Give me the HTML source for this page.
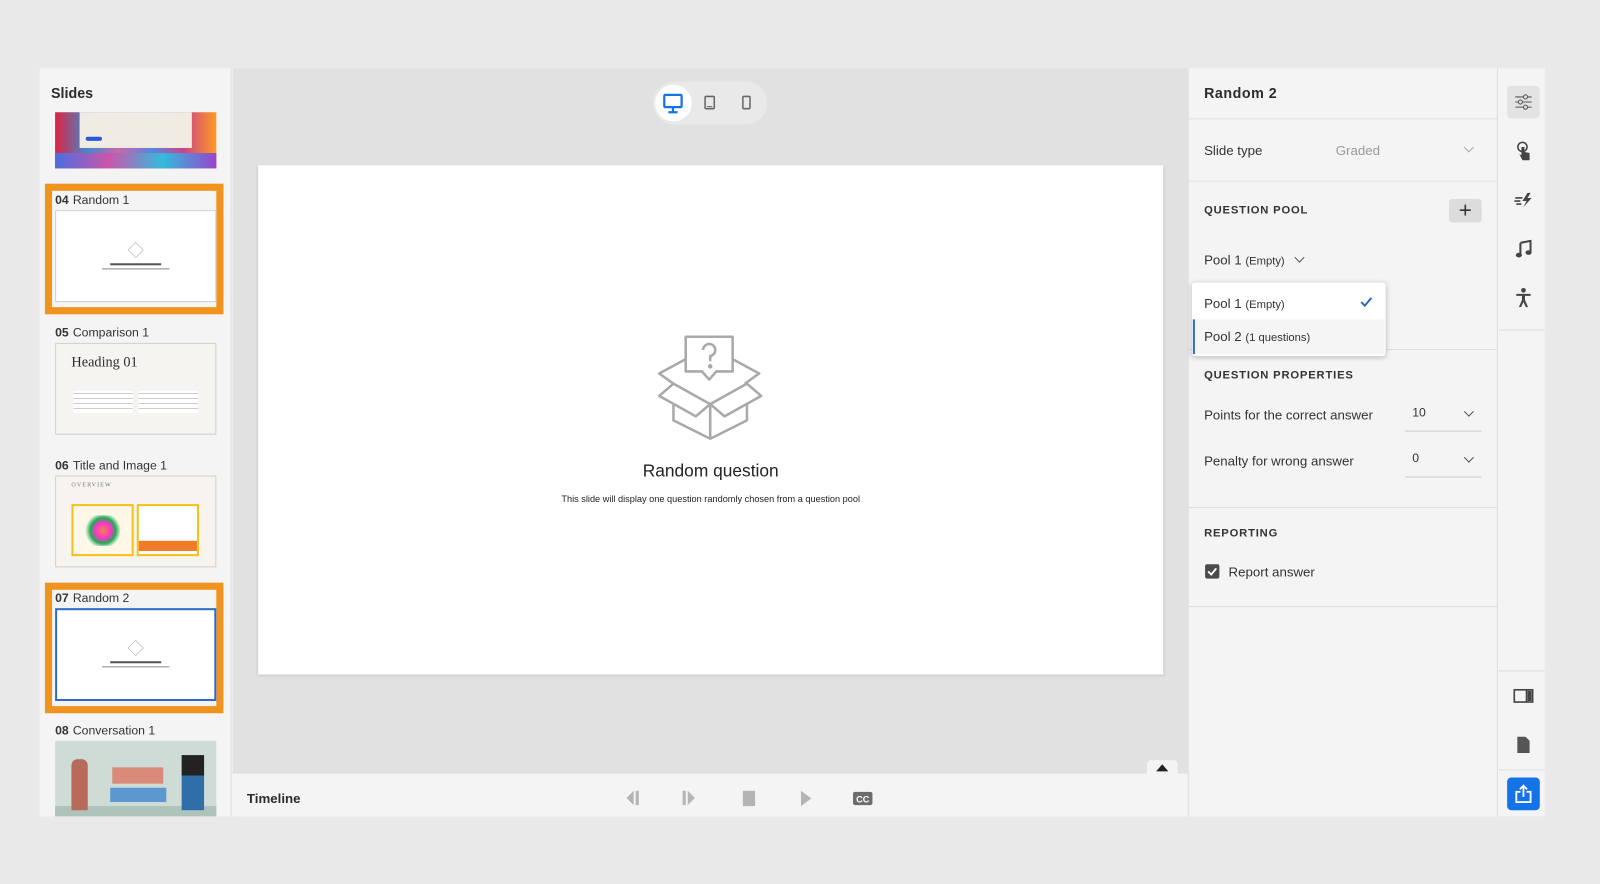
<!DOCTYPE html>
<html><head><meta charset="utf-8"><style>
*{box-sizing:border-box;margin:0;padding:0}
html,body{width:1600px;height:884px;overflow:hidden;background:#e9e9e9;font-family:"Liberation Sans",sans-serif;color:#2c2c2c}
#w{position:absolute;left:0;top:0;width:1568px;height:866px;transform:scale(1.0204);transform-origin:0 0}
.a{position:absolute}
.lbl{font-size:12px;color:#333}
.lbl b{font-weight:bold;margin-right:4px}
.th{position:absolute;left:54px;width:158px;border:1px solid #d0d0d0;background:#fff}
.cap{font-size:11px;font-weight:bold;letter-spacing:.8px;color:#333}
.row{font-size:13px;color:#333}
.chev{position:absolute;width:7px;height:7px;border-right:1.6px solid #555;border-bottom:1.6px solid #555;transform:rotate(45deg)}
.ic{position:absolute;left:1477px;width:32px;height:32px;display:flex;align-items:center;justify-content:center}
</style></head><body><div id="w">
<!-- app frame -->
<div class="a" style="left:39px;top:67px;width:1475px;height:733px;background:#f4f4f4"></div>
<!-- left panel -->
<div class="a" style="left:39px;top:67px;width:188px;height:733px;background:#f4f4f4;border-right:1px solid #ddd"></div>
<div class="a" style="left:50px;top:83px;font-size:14px;font-weight:bold">Slides</div>
<!-- thumb 1 -->
<div class="a" style="left:54px;top:110px;width:158px;height:55px;background:linear-gradient(90deg,#d24 0%,#48c 20%,#c6a 40%,#58d 60%,#c48 80%,#f92 100%)"></div>
<div class="a" style="left:54px;top:150px;width:158px;height:15px;background:linear-gradient(90deg,#4a6ee0,#c5a,#3bd,#94c)"></div>
<div class="a" style="left:78px;top:110px;width:110px;height:35px;background:#f0ece4"></div>
<div class="a" style="left:84px;top:134px;width:16px;height:4px;background:#2a5ad8;border-radius:2px"></div>
<!-- 04 -->
<div class="a" style="left:44px;top:180px;width:175px;height:128px;border:7px solid #f0941f;background:#f4f4f4"></div>
<div class="a lbl" style="left:54px;top:189px"><b>04</b>Random 1</div>
<div class="th" style="top:206px;height:90px"></div>
<div class="a" style="left:125px;top:237px;width:16px;height:16px;border:1px solid #bbb;transform:rotate(45deg) scale(.7)"></div>
<div class="a" style="left:108px;top:258px;width:50px;height:2px;background:#555"></div>
<div class="a" style="left:100px;top:263px;width:66px;height:1px;background:#888"></div>
<!-- 05 -->
<div class="a lbl" style="left:54px;top:319px"><b>05</b>Comparison 1</div>
<div class="th" style="top:336px;height:90px;background:#f6f4f1"></div>
<div class="a" style="left:70px;top:348px;font-family:'Liberation Serif',serif;font-size:14px">Heading 01</div>
<div class="a" style="left:72px;top:383px;width:58px;height:22px;background:repeating-linear-gradient(#fff 0 2px,#ccc 2px 3px,#fff 3px 5px)"></div>
<div class="a" style="left:136px;top:383px;width:58px;height:22px;background:repeating-linear-gradient(#fff 0 2px,#ccc 2px 3px,#fff 3px 5px)"></div>
<!-- 06 -->
<div class="a lbl" style="left:54px;top:449px"><b>06</b>Title and Image 1</div>
<div class="th" style="top:466px;height:90px;background:#f7f3ee"></div>
<div class="a" style="left:70px;top:473px;font-family:'Liberation Serif',serif;font-size:6px;letter-spacing:1px;color:#777">OVERVIEW</div>
<div class="a" style="left:70px;top:494px;width:61px;height:51px;border:2px solid #f2c21b;background:#fff8e8"></div>
<div class="a" style="left:81px;top:505px;width:40px;height:30px;background:radial-gradient(circle,#e84 0,#f3c 30%,#2a5 50%,transparent 70%)"></div>
<div class="a" style="left:134px;top:494px;width:61px;height:51px;border:2px solid #f2c21b;background:#fff"></div>
<div class="a" style="left:136px;top:530px;width:57px;height:10px;background:#f27b2a"></div>
<!-- 07 -->
<div class="a" style="left:44px;top:571px;width:175px;height:128px;border:7px solid #f0941f;background:#f4f4f4"></div>
<div class="a lbl" style="left:54px;top:579px"><b>07</b>Random 2</div>
<div class="th" style="top:596px;height:91px;border:2px solid #2d6bc7"></div>
<div class="a" style="left:125px;top:627px;width:16px;height:16px;border:1px solid #bbb;transform:rotate(45deg) scale(.7)"></div>
<div class="a" style="left:108px;top:648px;width:50px;height:2px;background:#555"></div>
<div class="a" style="left:100px;top:653px;width:66px;height:1px;background:#888"></div>
<!-- 08 -->
<div class="a lbl" style="left:54px;top:709px"><b>08</b>Conversation 1</div>
<div class="a" style="left:54px;top:726px;width:158px;height:74px;background:#cfdcd6"></div>
<div class="a" style="left:54px;top:790px;width:158px;height:10px;background:#aec4bb"></div>
<div class="a" style="left:110px;top:752px;width:50px;height:16px;background:#d98a78"></div>
<div class="a" style="left:108px;top:772px;width:55px;height:14px;background:#5d97cf"></div>
<div class="a" style="left:70px;top:744px;width:16px;height:50px;background:#b86b5a;border-radius:6px 6px 0 0"></div>
<div class="a" style="left:178px;top:760px;width:22px;height:34px;background:#2f6ea9"></div>
<div class="a" style="left:178px;top:740px;width:22px;height:20px;background:#222"></div>
<!-- center -->
<div class="a" style="left:228px;top:67px;width:936px;height:690px;background:#e1e1e1"></div>
<div class="a" style="left:640px;top:80px;width:112px;height:42px;background:#e9e9e9;border-radius:21px"></div>
<div class="a" style="left:642px;top:83px;width:36px;height:36px;background:#fff;border-radius:18px"></div>
<svg class="a" style="left:648px;top:90px" width="24" height="22" viewBox="0 0 24 22"><rect x="3" y="3" width="17" height="12" rx="1" fill="none" stroke="#1473e6" stroke-width="2.2"/><path d="M11.5 15v4M7 20h9" stroke="#1473e6" stroke-width="2.2"/></svg>
<svg class="a" style="left:689px;top:93px" width="14" height="16"><rect x="2" y="1.5" width="9" height="12" rx="1" fill="none" stroke="#666" stroke-width="1.5"/><path d="M4 11.5h5" stroke="#666"/></svg>
<svg class="a" style="left:726px;top:93px" width="12" height="16"><rect x="2" y="1.5" width="7" height="12" rx="1" fill="none" stroke="#666" stroke-width="1.5"/></svg>
<div class="a" style="left:253px;top:162px;width:887px;height:499px;background:#fff;box-shadow:0 1px 3px rgba(0,0,0,.15)"></div>
<svg class="a" style="left:640px;top:326px" width="112" height="108" viewBox="0 0 112 108" fill="none" stroke="#a9a9a9" stroke-width="2.5" stroke-linejoin="round">
<path d="M32 4h46v34H62l-7 8-7-8H32z"/>
<path d="M49 17a6 6 0 1 1 7 6v5"/><circle cx="56" cy="33" r="1" fill="#a9a9a9"/>
<path d="M32 26L6 40l14 10M78 26l26 14-14 10"/>
<path d="M20 50l36 20 36-20M20 50L6 62l36 20 14-12M92 50l14 12-36 20-14-12"/>
<path d="M20 70v16l36 18 36-18V70M56 70v34"/>
</svg>
<div class="a" style="left:253px;width:887px;top:452px;text-align:center;font-size:17px;color:#222">Random question</div>
<div class="a" style="left:253px;width:887px;top:484px;text-align:center;font-size:9px;color:#222">This slide will display one question randomly chosen from a question pool</div>
<!-- timeline -->
<div class="a" style="left:228px;top:757px;width:936px;height:43px;background:#f4f4f4;border-top:1px solid #ddd"></div>
<div class="a" style="left:1124px;top:745px;width:30px;height:13px;background:#f4f4f4;border-radius:4px 4px 0 0"></div>
<div class="a" style="left:1133px;top:749px;border-left:6px solid transparent;border-right:6px solid transparent;border-bottom:7px solid #222"></div>
<div class="a" style="left:242px;top:775px;font-size:13px;font-weight:bold">Timeline</div>
<svg class="a" style="left:612px;top:773px" width="250" height="20" fill="#b4b4b4">
<path d="M2 9l7-7v14z"/><rect x="11" y="2" width="3" height="14"/>
<rect x="57" y="2" width="3" height="14"/><path d="M62 2l7 7-7 7z"/>
<rect x="116" y="2" width="12" height="15"/>
<path d="M173 2l10 7.5-10 7.5z"/>
<rect x="224" y="3" width="19" height="13" rx="2" fill="#6c6c6c"/><text x="227" y="13.5" font-size="9" font-weight="bold" fill="#fff" font-family="Liberation Sans">CC</text>
</svg>
<!-- right panel -->
<div class="a" style="left:1164px;top:67px;width:304px;height:733px;background:#f4f4f4;border-left:1px solid #ddd;border-right:1px solid #ddd"></div>
<div class="a" style="left:1180px;top:83px;font-size:14px;font-weight:bold;letter-spacing:.5px">Random 2</div>
<div class="a" style="left:1165px;top:116px;width:302px;height:1px;background:#ddd"></div>
<div class="a row" style="left:1180px;top:140px">Slide type</div>
<div class="a row" style="left:1309px;top:140px;color:#999">Graded</div>
<div class="chev" style="left:1436px;top:141px;border-color:#aaa"></div>
<div class="a" style="left:1165px;top:177px;width:302px;height:1px;background:#ddd"></div>
<div class="a cap" style="left:1180px;top:200px">QUESTION POOL</div>
<div class="a" style="left:1420px;top:195px;width:32px;height:23px;background:#dcdcdc;border-radius:3px;font-size:22px;line-height:22px;text-align:center;color:#333">+</div>
<div class="a row" style="left:1180px;top:247px">Pool 1 <span style="font-size:11px">(Empty)</span></div>
<div class="chev" style="left:1270px;top:249px"></div>
<div class="a" style="left:1165px;top:342px;width:302px;height:1px;background:#ddd"></div>
<!-- dropdown -->
<div class="a" style="left:1168px;top:277px;width:190px;height:72px;background:#fff;border-radius:3px;box-shadow:0 1px 5px rgba(0,0,0,.25)"></div>
<div class="a" style="left:1169px;top:313px;width:188px;height:34px;background:#f5f5f5;border-left:2px solid #2d6bc7"></div>
<div class="a row" style="left:1180px;top:290px">Pool 1 <span style="font-size:11px">(Empty)</span></div>
<svg class="a" style="left:1332px;top:290px" width="14" height="12"><path d="M2 6l3.5 3.5L12 2" fill="none" stroke="#2d6bc7" stroke-width="2"/></svg>
<div class="a row" style="left:1180px;top:322px">Pool 2 <span style="font-size:11px">(1 questions)</span></div>
<div class="a cap" style="left:1180px;top:362px">QUESTION PROPERTIES</div>
<div class="a row" style="left:1180px;top:399px">Points for the correct answer</div>
<div class="a row" style="left:1384px;top:397px;font-size:12px">10</div>
<div class="chev" style="left:1436px;top:400px"></div>
<div class="a" style="left:1377px;top:422px;width:75px;height:1px;background:#ccc"></div>
<div class="a row" style="left:1180px;top:444px">Penalty for wrong answer</div>
<div class="a row" style="left:1384px;top:442px;font-size:12px">0</div>
<div class="chev" style="left:1436px;top:445px"></div>
<div class="a" style="left:1377px;top:467px;width:75px;height:1px;background:#ccc"></div>
<div class="a" style="left:1165px;top:497px;width:302px;height:1px;background:#ddd"></div>
<div class="a cap" style="left:1180px;top:517px">REPORTING</div>
<div class="a" style="left:1181px;top:553px;width:14px;height:14px;background:#4b4b4b;border-radius:2px"></div>
<svg class="a" style="left:1181px;top:553px" width="14" height="14"><path d="M3 7l3 3 5-6" fill="none" stroke="#fff" stroke-width="1.8"/></svg>
<div class="a row" style="left:1204px;top:553px">Report answer</div>
<div class="a" style="left:1165px;top:594px;width:302px;height:1px;background:#ddd"></div>
<!-- icon rail -->
<div class="a" style="left:1469px;top:323px;width:45px;height:1px;background:#ddd"></div>
<div class="a" style="left:1469px;top:657px;width:45px;height:1px;background:#ddd"></div>
<div class="a" style="left:1469px;top:754px;width:45px;height:1px;background:#ddd"></div>
<div class="ic" style="top:84px;background:#e3e3e3;border-radius:4px"><svg width="18" height="16" stroke="#555" fill="none"><path d="M1 3h16M1 8h16M1 13h16"/><circle cx="11" cy="3" r="2" fill="#e3e3e3"/><circle cx="6" cy="8" r="2" fill="#e3e3e3"/><circle cx="11" cy="13" r="2" fill="#e3e3e3"/></svg></div>
<div class="ic" style="top:132px"><svg width="16" height="20"><circle cx="7" cy="6" r="4.5" fill="none" stroke="#444" stroke-width="1.5"/><path d="M6 6v8l-2-1 3 6h7v-7l-5-1V6z" fill="#444"/></svg></div>
<div class="ic" style="top:180px"><svg width="18" height="16" fill="#444"><path d="M1 6h7M0 9h6M2 12h5" stroke="#444" stroke-width="1.6"/><path d="M13 1l-5 8h4l-3 6 8-9h-4l3-5z"/></svg></div>
<div class="ic" style="top:228px"><svg width="16" height="18" fill="#444"><path d="M5 3l10-2v11" stroke="#444" stroke-width="2" fill="none"/><path d="M5 3v12" stroke="#444" stroke-width="2"/><ellipse cx="3.5" cy="15" rx="3" ry="2.3"/><ellipse cx="13" cy="12.5" rx="3" ry="2.3"/></svg></div>
<div class="ic" style="top:276px"><svg width="16" height="20" fill="#444"><circle cx="8" cy="2.5" r="2.3"/><path d="M1 6h14v2H9.5v4l3 7h-2.2L8 14l-2.3 5H3.5l3-7V8H1z"/></svg></div>
<div class="ic" style="top:666px"><svg width="20" height="16" fill="none" stroke="#444" stroke-width="1.6"><rect x="1" y="2" width="18" height="12"/><path d="M13 2v12" /><rect x="14" y="3" width="4" height="10" fill="#444" stroke="none"/></svg></div>
<div class="ic" style="top:714px"><svg width="14" height="18" fill="#555"><path d="M1 1h8l4 4v12H1z"/></svg></div>
<div class="ic" style="top:762px;background:#1473e6;border-radius:4px"><svg width="18" height="20" fill="none" stroke="#fff" stroke-width="1.8"><path d="M6 8H2v10h14V8h-4"/><path d="M9 13V2M5.5 5.5L9 2l3.5 3.5"/></svg></div>
</div></body></html>
